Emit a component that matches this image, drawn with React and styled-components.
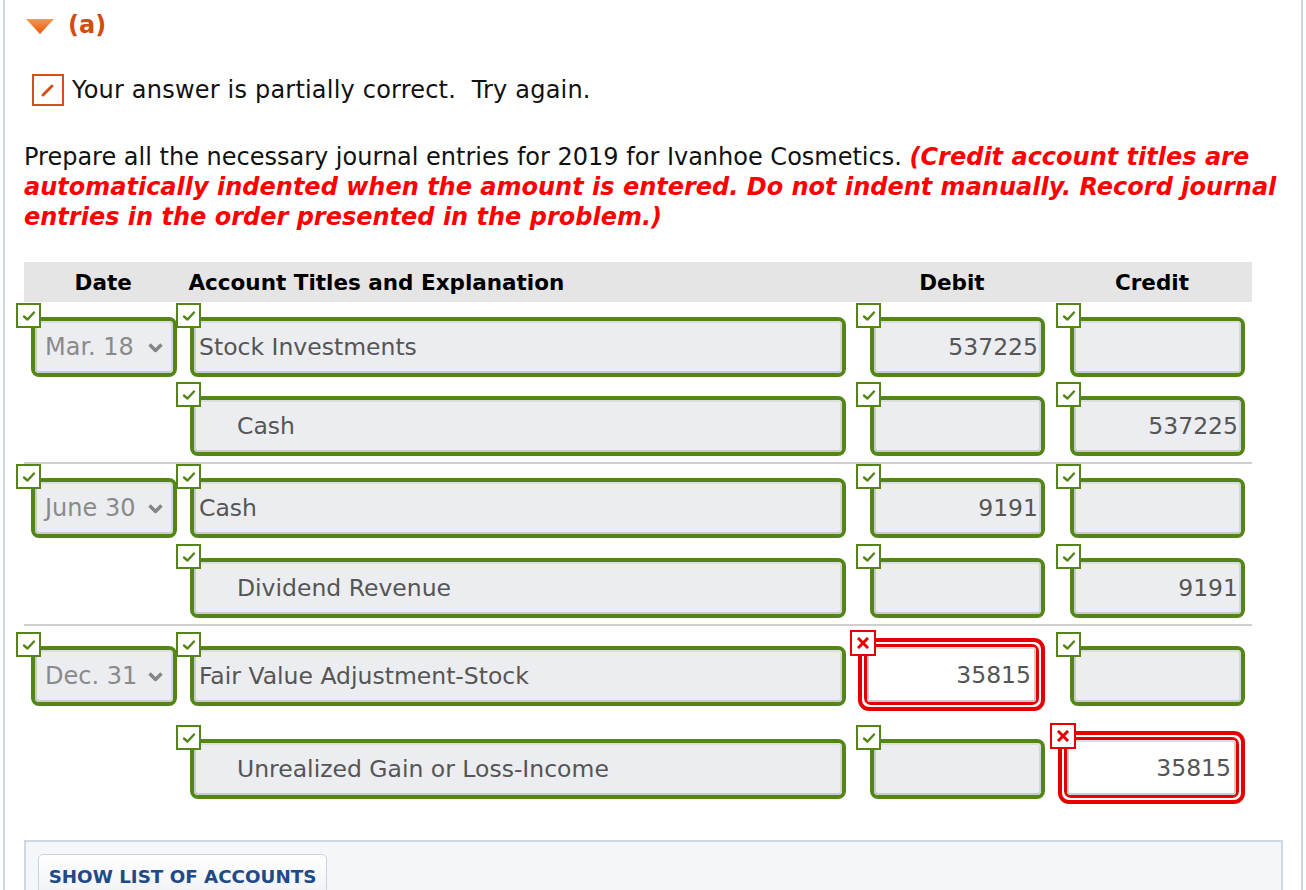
import React from 'react';
import styled, { createGlobalStyle } from 'styled-components';

const GREEN = '#538617';
const RED = '#e60000';

const GlobalStyle = createGlobalStyle`
  html, body { margin: 0; padding: 0; background: #fff; }
  body { font-family: "DejaVu Sans", Verdana, sans-serif; overflow: hidden; }
  * { box-sizing: border-box; }
`;

// each entry: top padding, then its lines (mt = gap above the line)
const entries = [
  {
    top: 1,
    lines: [
      { date: 'Mar. 18', account: 'Stock Investments', debit: '537225', credit: '', mt: 0 },
      { account: 'Cash', indent: true, debit: '', credit: '537225', mt: 5 },
    ],
  },
  {
    top: 0,
    lines: [
      { date: 'June 30', account: 'Cash', debit: '9191', credit: '', mt: 0 },
      { account: 'Dividend Revenue', indent: true, debit: '', credit: '9191', mt: 6 },
    ],
  },
  {
    top: 6,
    last: true,
    lines: [
      { date: 'Dec. 31', account: 'Fair Value Adjustment-Stock', debit: '35815', credit: '', debitWrong: true, mt: 0 },
      { account: 'Unrealized Gain or Loss-Income', indent: true, debit: '', credit: '35815', creditWrong: true, mt: 19 },
    ],
  },
];

const Check = () => (
  <CheckBox>
    <svg width="14" height="12" viewBox="0 0 14 12">
      <polyline points="2,6.5 5.5,9.5 12,2.5" fill="none" stroke={GREEN} strokeWidth="2.4" strokeLinecap="round" strokeLinejoin="round" />
    </svg>
  </CheckBox>
);

const Cross = () => (
  <CrossBox>
    <svg width="12" height="12" viewBox="0 0 12 12">
      <path d="M2 2 L10 10 M10 2 L2 10" stroke={RED} strokeWidth="3" strokeLinecap="square" />
    </svg>
  </CrossBox>
);

const AmountCell = ({ value, wrong }) => (
  <Cell>
    {wrong ? <Cross /> : <Check />}
    {wrong ? (
      <RedOuter>
        <RedInner>
          <WhiteInput>{value}</WhiteInput>
        </RedInner>
      </RedOuter>
    ) : (
      <Field $w={175}>
        <Inner $align="right">{value}</Inner>
      </Field>
    )}
  </Cell>
);

const Line = ({ line }) => (
  <LineGrid $mt={line.mt}>
    <Cell $left={15}>
      {line.date && (
        <>
          <Check />
          <Field $w={146}>
            <DateInner>
              {line.date}
              <svg width="17" height="11" viewBox="0 0 17 11">
                <polyline points="2.5,2.5 8.5,8.5 14.5,2.5" fill="none" stroke="#858585" strokeWidth="3.4" strokeLinejoin="round" />
              </svg>
            </DateInner>
          </Field>
        </>
      )}
    </Cell>
    <Cell>
      <Check />
      <Field $w={656}>
        <Inner $indent={line.indent}>{line.account}</Inner>
      </Field>
    </Cell>
    <AmountCell value={line.debit} wrong={line.debitWrong} />
    <AmountCell value={line.credit} wrong={line.creditWrong} />
  </LineGrid>
);

export default function App() {
  return (
    <>
      <GlobalStyle />
      <Page>
        <TitleRow>
          <svg width="28" height="15" viewBox="0 0 28 15">
            <defs>
              <linearGradient id="tri" x1="0" y1="0" x2="0" y2="1">
                <stop offset="0" stopColor="#f9974a" />
                <stop offset="1" stopColor="#e8560c" />
              </linearGradient>
            </defs>
            <polygon points="0,0 28,0 14,15" fill="url(#tri)" />
          </svg>
          <PartLabel>(a)</PartLabel>
        </TitleRow>

        <StatusRow>
          <PencilBox>
            <svg width="28" height="28" viewBox="0 0 28 28">
              <line x1="9" y1="19" x2="18" y2="10" stroke="#d4501c" strokeWidth="3" strokeLinecap="round" />
            </svg>
          </PencilBox>
          <span>Your answer is partially correct.&nbsp; Try again.</span>
        </StatusRow>

        <Prompt>
          Prepare all the necessary journal entries for 2019 for Ivanhoe Cosmetics.{' '}
          <Warn>
            (Credit account titles are
            <br />
            automatically indented when the amount is entered. Do not indent manually. Record journal
            <br />
            entries in the order presented in the problem.)
          </Warn>
        </Prompt>

        <Table>
          <HeadBand>
            <HeadCell $w={160} $center>Date</HeadCell>
            <HeadCell $w={680}>Account Titles and Explanation</HeadCell>
            <HeadCell $w={200} $center $shift={6}>Debit</HeadCell>
            <HeadCell $w={200} $center $shift={2}>Credit</HeadCell>
          </HeadBand>
          {entries.map((entry, i) => (
            <Entry key={i} $last={entry.last} $top={entry.top}>
              {entry.lines.map((line, j) => (
                <Line key={j} line={line} />
              ))}
            </Entry>
          ))}
        </Table>

        <AccountsPanel>
          <AccountsButton>SHOW LIST OF ACCOUNTS</AccountsButton>
        </AccountsPanel>
      </Page>
    </>
  );
}

const Page = styled.div`
  margin-left: 3px;
  width: 1300px;
  height: 890px;
  border-left: 2px solid #cfd6e3;
  border-right: 2px solid #cfd6e3;
  padding: 12px 0 0 19px;
  color: #111;
`;

const TitleRow = styled.div`
  display: flex;
  align-items: center;
  gap: 14px;
  height: 26px;
  padding-left: 2px;
  svg { margin-top: 2px; }
`;

const PartLabel = styled.span`
  font-size: 24px;
  font-weight: bold;
  color: #d44a10;
`;

const StatusRow = styled.div`
  display: flex;
  align-items: center;
  gap: 8px;
  margin-top: 36px;
  padding-left: 8px;
  font-size: 24px;
  letter-spacing: 0.2px;
`;

const PencilBox = styled.div`
  width: 32px;
  height: 32px;
  border: 2px solid #d4501c;
  display: flex;
  align-items: center;
  justify-content: center;
`;

const Prompt = styled.p`
  margin: 36px 0 0;
  font-size: 24px;
  line-height: 30px;
  width: 1280px;
  white-space: nowrap;
`;

const Warn = styled.em`
  color: #ff0000;
  font-weight: bold;
  font-style: italic;
`;

const Table = styled.div`
  width: 1228px;
  margin-top: 30px;
`;

const HeadBand = styled.div`
  display: flex;
  height: 40px;
  background: #e5e5e5;
`;

const HeadCell = styled.div`
  width: ${p => p.$w}px;
  display: flex;
  align-items: center;
  justify-content: ${p => (p.$center ? 'center' : 'flex-start')};
  padding-left: ${p => (p.$center ? 0 : 6)}px;
  padding-right: ${p => p.$shift || 0}px;
  font-size: 21.5px;
  font-weight: bold;
  color: #000;
`;

const Entry = styled.div`
  padding-top: ${p => p.$top}px;
  padding-bottom: 6px;
  border-bottom: ${p => (p.$last ? 'none' : '2px solid #cfcfcf')};
`;

const LineGrid = styled.div`
  display: grid;
  grid-template-columns: 160px 680px 200px 196px;
  height: 74px;
  margin-left: -8px;
  margin-top: ${p => p.$mt}px;
`;

const Cell = styled.div`
  position: relative;
  padding-left: ${p => p.$left || 14}px;
  padding-top: 14px;
`;

const CheckBox = styled.div`
  position: absolute;
  left: 0;
  top: 0;
  width: 25px;
  height: 25px;
  border: 2px solid ${GREEN};
  background: #fff;
  display: flex;
  align-items: center;
  justify-content: center;
  z-index: 2;
`;

const CrossBox = styled.div`
  position: absolute;
  left: -6px;
  top: -2px;
  width: 26px;
  height: 26px;
  border: 2px solid ${RED};
  background: #fff;
  display: flex;
  align-items: center;
  justify-content: center;
  z-index: 2;
`;

const Field = styled.div`
  width: ${p => p.$w}px;
  height: 60px;
  border: 4px solid ${GREEN};
  border-radius: 8px;
  background: #fff;
`;

const Inner = styled.div`
  height: 100%;
  border: 2px solid #c9cacd;
  border-top-color: #dcdde0;
  border-right-color: #d6d7da;
  border-radius: 4px;
  background: #ecedf0;
  display: flex;
  align-items: center;
  justify-content: ${p => (p.$align === 'right' ? 'flex-end' : 'flex-start')};
  padding: 0 ${p => (p.$align === 'right' ? 1 : 0)}px 0 ${p => (p.$indent ? 41 : 3)}px;
  font-size: 23.5px;
  color: #555;
  white-space: nowrap;
`;

const DateInner = styled(Inner)`
  justify-content: space-between;
  padding: 0 7px 0 8px;
  color: #8a8a8a;
  font-size: 24px;
`;

const RedOuter = styled.div`
  width: 187px;
  height: 73px;
  margin-left: -12px;
  margin-top: -8px;
  border: 4px solid ${RED};
  border-radius: 11px;
  padding: 2px;
  background: #fff;
`;

const RedInner = styled.div`
  height: 100%;
  border: 3px solid ${RED};
  border-radius: 7px;
  background: #fff;
`;

const WhiteInput = styled.div`
  height: 100%;
  border: 2px solid #cbcbcb;
  border-top-color: #dedede;
  border-radius: 3px;
  background: #fff;
  display: flex;
  align-items: center;
  justify-content: flex-end;
  padding-right: 3px;
  font-size: 23.5px;
  color: #555;
`;

const AccountsPanel = styled.div`
  width: 1259px;
  margin-top: 35px;
  border: 2px solid #cfd7e4;
  border-bottom: none;
  background: #f4f7fa;
  padding: 12px 12px 0;
  height: 80px;
`;

const AccountsButton = styled.div`
  display: inline-flex;
  align-items: center;
  justify-content: center;
  width: 289px;
  height: 44px;
  border: 1px solid #cdd3dc;
  border-radius: 5px;
  background: linear-gradient(#ffffff, #eef1f5);
  font-size: 18.3px;
  font-weight: bold;
  color: #1f4a85;
  white-space: nowrap;
`;
